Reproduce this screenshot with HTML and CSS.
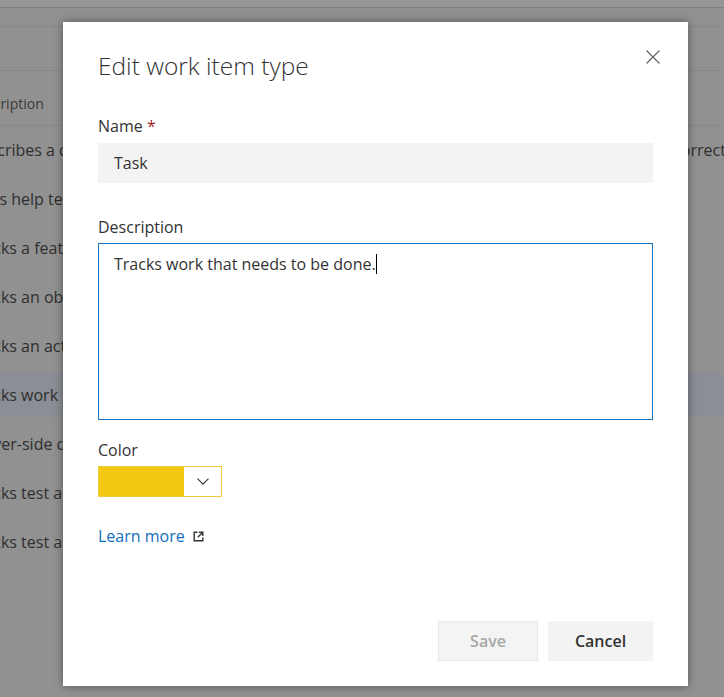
FILE: index.html
```html
<!DOCTYPE html>
<html lang="en">
<head>
<meta charset="utf-8">
<title>Edit work item type</title>
<link rel="stylesheet" href="styles.css">
</head>
<body>
<div class="page">
  <div class="topbar"></div>
  <div class="band1"></div>
  <div class="band2"></div>
  <div class="headrow"><span class="cell">Description</span></div>
  <div class="rows">
    <div class="row"><span class="cell">Describes a divergence <span class="tail">between required and actual behavior, and tracks the work done to correct the behavior and verify the correction has been implemented.</span></span></div>
    <div class="row"><span class="cell">Epics help teams effectively manage and groom their product backlog</span></div>
    <div class="row"><span class="cell">Tracks a feature that will be released with the product</span></div>
    <div class="row"><span class="cell">Tracks an obstacle to progress.</span></div>
    <div class="row"><span class="cell">Tracks an activity the user will be able to perform with the product</span></div>
    <div class="row selected"><span class="cell">Tracks work that needs to be done.</span></div>
    <div class="row"><span class="cell">Server-side data for a set of steps to be tested.</span></div>
    <div class="row"><span class="cell">Tracks test activities for a specific milestone or release.</span></div>
    <div class="row"><span class="cell">Tracks test activites for a specific feature, requirement, or user story.</span></div>
  </div>
</div>

<div class="dialog" role="dialog" aria-label="Edit work item type">
  <div class="header">
    <h1 class="title">Edit work item type</h1>
    <button class="close" aria-label="Close">
      <svg width="14" height="14" viewBox="0 0 14 14"><path d="M0.5 0.5 L13.5 13.5 M13.5 0.5 L0.5 13.5" stroke="#5f5f5f" stroke-width="1.1" fill="none"/></svg>
    </button>
  </div>

  <label class="label name-label">Name <span class="req">*</span></label>
  <div class="input">Task</div>

  <label class="label desc-label">Description</label>
  <div class="textarea">Tracks work that needs to be done.<span class="caret"></span></div>

  <label class="label color-label">Color</label>
  <div class="colorpicker">
    <div class="swatch"></div>
    <div class="chev">
      <svg width="12" height="7" viewBox="0 0 12 7"><path d="M0.5 0.6 L6 6.2 L11.5 0.6" stroke="#333" stroke-width="1.1" fill="none"/></svg>
    </div>
  </div>

  <a class="learn" href="#">Learn more
    <svg class="ext" width="11" height="11" viewBox="0 0 11 11"><path d="M4.5 1.2 H1.2 V9.8 H9.8 V6.5" stroke="#333" stroke-width="1.4" fill="none"/><path d="M4.8 6.2 L9.6 1.4 M6 1.2 H9.8 V5" stroke="#333" stroke-width="1.4" fill="none"/></svg>
  </a>

  <div class="footer">
    <button class="btn save" disabled>Save</button>
    <button class="btn cancel">Cancel</button>
  </div>
</div>
</body>
</html>
```

FILE: styles.css
```css
* { box-sizing: border-box; }

html, body {
  margin: 0;
  padding: 0;
  width: 724px;
  height: 697px;
  overflow: hidden;
  background: #919191;
  font-family: "Open Sans", "Noto Sans", sans-serif;
}

.page {
  width: 724px;
  color: #2f2f2f;
}

.topbar {
  height: 8px;
  background: #969696;
  border-bottom: 1px solid #7e7e7e;
}

.band1 {
  height: 19px;
  border-bottom: 1px solid #888888;
}

.band2 {
  height: 44px;
  border-bottom: 1px solid #888888;
}

.headrow {
  height: 55px;
  border-bottom: 1px solid #888888;
  display: flex;
  align-items: center;
  font-size: 14px;
  color: #3a3a3a;
  padding-top: 10px;
}

.cell {
  white-space: nowrap;
  margin-left: -31px;
}

.tail {
  word-spacing: 2px;
}

.rows {
  padding-top: 2px;
  display: flex;
  flex-direction: column;
  gap: 5px;
}

.row {
  height: 44px;
  display: flex;
  align-items: center;
  font-size: 16px;
}

.row.selected {
  background: #8b8e94;
}

/* dialog */
.dialog {
  position: absolute;
  left: 63px;
  top: 22px;
  width: 625px;
  height: 664px;
  background: #ffffff;
  box-shadow: 0 0 9px rgba(0, 0, 0, 0.4);
  padding: 28px 35px 25px 35px;
  display: flex;
  flex-direction: column;
  color: #333333;
}

.header {
  display: flex;
  justify-content: space-between;
  align-items: flex-start;
  height: 32px;
}

.title {
  margin: 0;
  font-size: 24.5px;
  font-weight: 300;
  line-height: 32px;
  color: #333333;
}

.close {
  width: 32px;
  height: 32px;
  margin: -9px -16px 0 0;
  padding: 0;
  border: none;
  background: transparent;
  display: flex;
  align-items: center;
  justify-content: center;
}

.label {
  display: block;
  font-size: 16px;
  line-height: 22px;
  color: #333333;
}

.req {
  color: #a4262c;
}

.name-label { margin-top: 33px; margin-bottom: 6px; }
.desc-label { margin-top: 33px; margin-bottom: 5px; }
.color-label { margin-top: 19px; margin-bottom: 5px; }

.input {
  height: 40px;
  background: #f3f3f3;
  font-size: 16px;
  line-height: 40px;
  padding: 0 16px;
  color: #333333;
}

.textarea {
  height: 177px;
  border: 1px solid #1a73c0;
  font-size: 16px;
  line-height: 22px;
  padding: 9px 15px;
  color: #333333;
}

.caret {
  display: inline-block;
  width: 1px;
  height: 20px;
  background: #000;
  vertical-align: -4px;
}

.colorpicker {
  width: 124px;
  height: 31px;
  border: 1px solid #eccb3f;
  display: flex;
}

.swatch {
  width: 85px;
  background: #f2c811;
}

.chev {
  flex: 1;
  display: flex;
  align-items: center;
  justify-content: center;
  background: #ffffff;
}

.learn {
  margin-top: 28px;
  font-size: 16px;
  line-height: 22px;
  color: #106ebe;
  text-decoration: none;
  display: flex;
  align-items: center;
  gap: 8px;
  align-self: flex-start;
}

.ext { margin-top: 1px; }

.footer {
  margin-top: auto;
  display: flex;
  justify-content: flex-end;
  gap: 10px;
}

.btn {
  height: 40px;
  font-family: "Open Sans", "Noto Sans", sans-serif;
  font-size: 16px;
  font-weight: 600;
  border: 1px solid #f3f3f3;
  background: #f3f3f3;
  color: #333333;
  padding: 0;
}

.save {
  width: 100px;
  color: #a6a6a6;
  background: #f4f4f4;
  border-color: #e8e8e8;
}

.cancel {
  width: 105px;
}
```
